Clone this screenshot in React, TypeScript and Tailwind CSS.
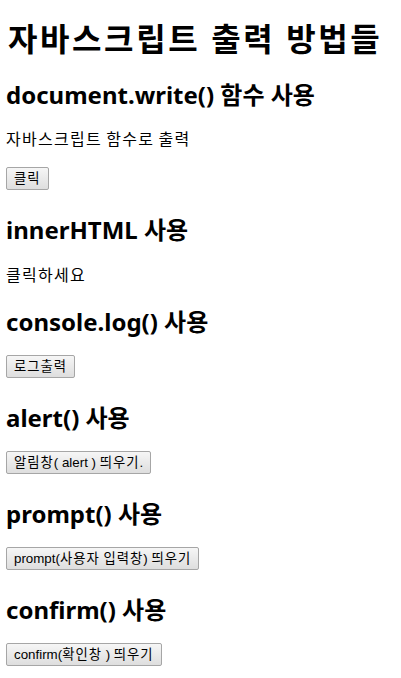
import type { ReactNode } from "react"

const HANGUL = /([\uAC00-\uD7A3]+)/

// Hangul runs get a little tracking so the text widths follow the reference
function Label({ text, wide }: { text: string; wide?: boolean }) {
  const parts = text.split(HANGUL).filter(Boolean)
  return (
    <>
      {parts.map((part, i) =>
        HANGUL.test(part) ? (
          <span key={i} className={wide ? "tracking-[1.3px]" : "tracking-[1px]"}>
            {part}
          </span>
        ) : (
          <span key={i}>{part}</span>
        )
      )}
    </>
  )
}

function Btn({ children }: { children: string }) {
  return (
    <button className="h-[23px] px-[7px] border border-[#a6a6a6] rounded-[2px] bg-gradient-to-b from-[#f6f6f6] to-[#dedede] text-[13.33px] leading-[21px] text-black whitespace-nowrap font-['Liberation_Sans','Noto_Sans_CJK_KR',sans-serif]">
      <Label text={children} />
    </button>
  )
}

function Heading({ children }: { children: ReactNode }) {
  return <h2 className="mt-[20px] text-[24px] font-bold leading-[32px] text-black">{children}</h2>
}

function BtnRow({ label }: { label: string }) {
  return (
    <div className="mt-[15px] h-[29px]">
      <Btn>{label}</Btn>
    </div>
  )
}

export default function App() {
  return (
    <div className="min-h-[678px] bg-white px-[6px] font-['Noto_Sans','Noto_Sans_CJK_KR',sans-serif] text-black">
      <div className="flex flex-col items-start pt-[17px]">
        <h1 className="ml-[2px] text-[32px] font-bold leading-[43px] tracking-[2.6px] text-black">
          자바스크립트 출력 방법들
        </h1>

        <h2 className="mt-[19px] text-[24px] font-bold leading-[32px] text-black">document.write() 함수 사용</h2>
        <p className="mt-[18px] text-[16px] leading-[21px]">
          <Label text="자바스크립트 함수로 출력" wide />
        </p>
        <BtnRow label="클릭" />

        <Heading>innerHTML 사용</Heading>
        <p className="mt-[19px] text-[16px] leading-[21px]">
          <Label text="클릭하세요" wide />
        </p>

        <Heading>console.log() 사용</Heading>
        <BtnRow label="로그출력" />

        <Heading>alert() 사용</Heading>
        <BtnRow label="알림창( alert ) 띄우기." />

        <Heading>prompt() 사용</Heading>
        <BtnRow label="prompt(사용자 입력창) 띄우기" />

        <Heading>confirm() 사용</Heading>
        <BtnRow label="confirm(확인창 ) 띄우기" />
      </div>
    </div>
  )
}
